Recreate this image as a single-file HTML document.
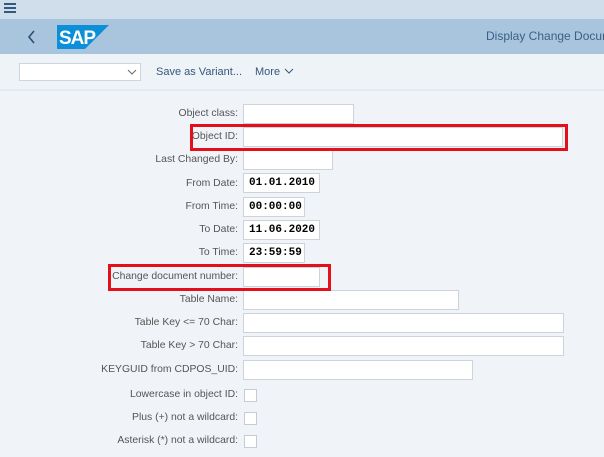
<!DOCTYPE html>
<html><head><style>
body{margin:0;width:604px;height:457px;overflow:hidden;background:#f0f4f8;font-family:"Liberation Sans",Arial,sans-serif;position:relative}
.a{position:absolute}
.lbl{position:absolute;right:366px;font-size:10.4px;color:#555;white-space:nowrap;line-height:14px}
.in{position:absolute;left:243px;height:20px;background:#fff;border:1px solid #cdd3da;box-sizing:border-box;font-family:"Liberation Mono",monospace;font-size:11px;color:#000;padding-left:5px;line-height:18px;font-weight:bold}
.cb{position:absolute;left:244px;width:11px;height:11px;background:#fff;border:1px solid #c5ccd4}
.red{position:absolute;border:3px solid #e3101c;box-sizing:border-box}
</style></head><body>
<div class="a" style="left:0;top:0;width:604px;height:19px;background:#d0deeb"></div>
<div class="a" style="left:4px;top:3px;width:12px;height:2px;background:#34597f;box-shadow:0 4px 0 #34597f,0 8px 0 #34597f"></div>
<div class="a" style="left:0;top:19px;width:604px;height:35px;background:#a9c5de"></div>
<svg class="a" style="left:27px;top:30px" width="10" height="14"><path d="M7 1 L2 7 L7 13" stroke="#2c4e74" stroke-width="1.6" fill="none"/></svg>
<svg class="a" style="left:57px;top:25px" width="52" height="24"><polygon points="0,0 52,0 28,24 0,24" fill="#0a8fd8"/><text x="2" y="19" font-family="Liberation Sans" font-weight="bold" font-size="19" fill="#fff" letter-spacing="-1">SAP</text></svg>
<div class="a" style="left:486px;top:29px;font-size:12px;color:#3a5f86;white-space:nowrap">Display Change Docum</div>
<div class="a" style="left:0;top:54px;width:604px;height:35px;background:#eef3f8"></div>
<div class="a" style="left:0;top:89px;width:604px;height:2px;background:#e2eaf2"></div>
<div class="a" style="left:19px;top:63px;width:122px;height:18px;background:#fff;border:1px solid #cfd5dc;box-sizing:border-box"></div>
<svg class="a" style="left:127px;top:69px" width="10" height="6"><path d="M1 1 L5 5 L9 1" stroke="#667" fill="none"/></svg>
<div class="a" style="left:156px;top:66px;font-size:11px;color:#34577c">Save as Variant...</div>
<div class="a" style="left:255px;top:66px;font-size:11px;color:#34577c">More</div>
<svg class="a" style="left:284px;top:68px" width="10" height="6"><path d="M1 1 L5 5 L9 1" stroke="#34577c" fill="none"/></svg>

<div class="lbl" style="top:107px">Object class:</div><div class="in" style="top:104px;width:111px"></div>
<div class="lbl" style="top:130px">Object ID:</div><div class="in" style="top:127px;width:320px"></div>
<div class="lbl" style="top:153px">Last Changed By:</div><div class="in" style="top:150px;width:90px"></div>
<div class="lbl" style="top:177px">From Date:</div><div class="in" style="top:173px;width:77px">01.01.2010</div>
<div class="lbl" style="top:200px">From Time:</div><div class="in" style="top:197px;width:62px">00:00:00</div>
<div class="lbl" style="top:223px">To Date:</div><div class="in" style="top:220px;width:77px">11.06.2020</div>
<div class="lbl" style="top:246px">To Time:</div><div class="in" style="top:243px;width:62px">23:59:59</div>
<div class="lbl" style="top:270px">Change document number:</div><div class="in" style="top:267px;width:77px"></div>
<div class="lbl" style="top:293px">Table Name:</div><div class="in" style="top:290px;width:216px"></div>
<div class="lbl" style="top:316px">Table Key &lt;= 70 Char:</div><div class="in" style="top:313px;width:321px"></div>
<div class="lbl" style="top:339px">Table Key &gt; 70 Char:</div><div class="in" style="top:336px;width:321px"></div>
<div class="lbl" style="top:363px">KEYGUID from CDPOS_UID:</div><div class="in" style="top:360px;width:230px"></div>
<div class="lbl" style="top:388px">Lowercase in object ID:</div><div class="cb" style="top:389px"></div>
<div class="lbl" style="top:411px">Plus (+) not a wildcard:</div><div class="cb" style="top:412px"></div>
<div class="lbl" style="top:434px">Asterisk (*) not a wildcard:</div><div class="cb" style="top:435px"></div>

<div class="red" style="left:190px;top:124px;width:378px;height:27px"></div>
<div class="red" style="left:108px;top:264px;width:223px;height:27px"></div>
</body></html>
